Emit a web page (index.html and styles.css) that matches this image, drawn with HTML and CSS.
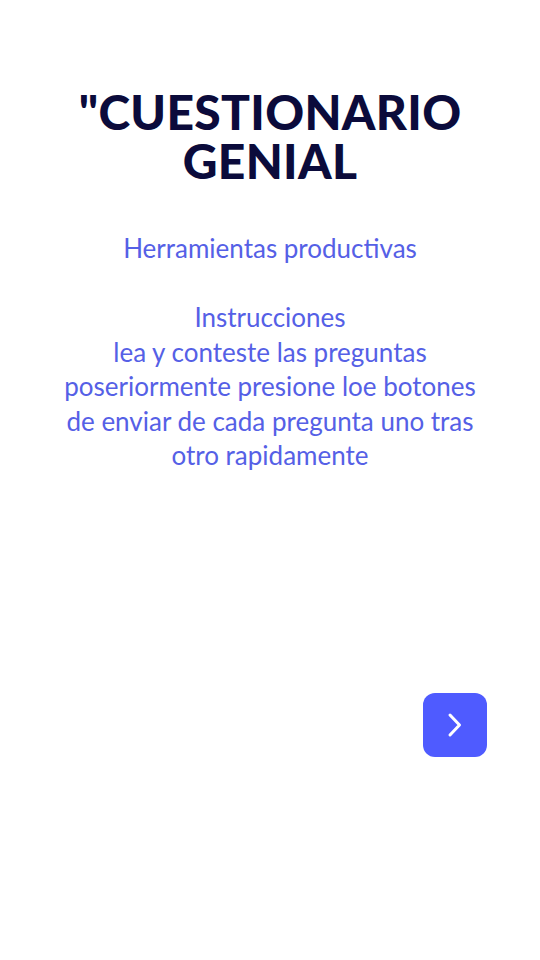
FILE: index.html
```html
<!DOCTYPE html>
<html lang="es">
<head>
<meta charset="utf-8">
<link rel="stylesheet" href="styles.css">
</head>
<body>
<main class="screen">
  <h1 class="title"><span class="title-line">"CUESTIONARIO</span><span class="title-line">GENIAL</span></h1>
  <p class="subtitle">Herramientas productivas</p>
  <p class="instructions">Instrucciones<br>lea y conteste las preguntas<br>poseriormente presione loe botones<br>de enviar de cada pregunta uno tras<br>otro rapidamente</p>
  <div class="actions">
    <button class="next" aria-label="Siguiente">
      <svg width="28" height="28" viewBox="0 0 28 28" fill="none"><path d="M9 4 L18.5 14 L9 24" stroke="#fff" stroke-width="3" stroke-linecap="round" stroke-linejoin="round"/></svg>
    </button>
  </div>
</main>
</body>
</html>
```
FILE: styles.css
```css
html, body {
  margin: 0;
  padding: 0;
  background: #ffffff;
}
.screen {
  width: 540px;
  height: 960px;
  box-sizing: border-box;
  padding: 87px 40px 0;
  display: flex;
  flex-direction: column;
  align-items: center;
  font-family: Lato, "Noto Sans", sans-serif;
}
.title {
  margin: 0;
  text-align: center;
  font-size: 48px;
  font-weight: 900;
  color: #0b0b3b;
  letter-spacing: 0.3px;
  display: flex;
  flex-direction: column;
  align-items: center;
}
.title-line {
  display: block;
  height: 49px;
  line-height: 49px;
}
.subtitle {
  margin: 46px 0 0;
  font-size: 26px;
  line-height: 34px;
  color: #5560e6;
  text-align: center;
}
.instructions {
  margin: 35px 0 0;
  font-size: 26px;
  line-height: 34.5px;
  color: #5560e6;
  text-align: center;
  white-space: nowrap;
}
.actions {
  align-self: stretch;
  display: flex;
  justify-content: flex-end;
  margin-top: 220px;
  margin-right: 13px;
}
.next {
  width: 64px;
  height: 64px;
  border: none;
  border-radius: 12px;
  background: #4f5bff;
  display: flex;
  align-items: center;
  justify-content: center;
  padding: 0;
}
```
